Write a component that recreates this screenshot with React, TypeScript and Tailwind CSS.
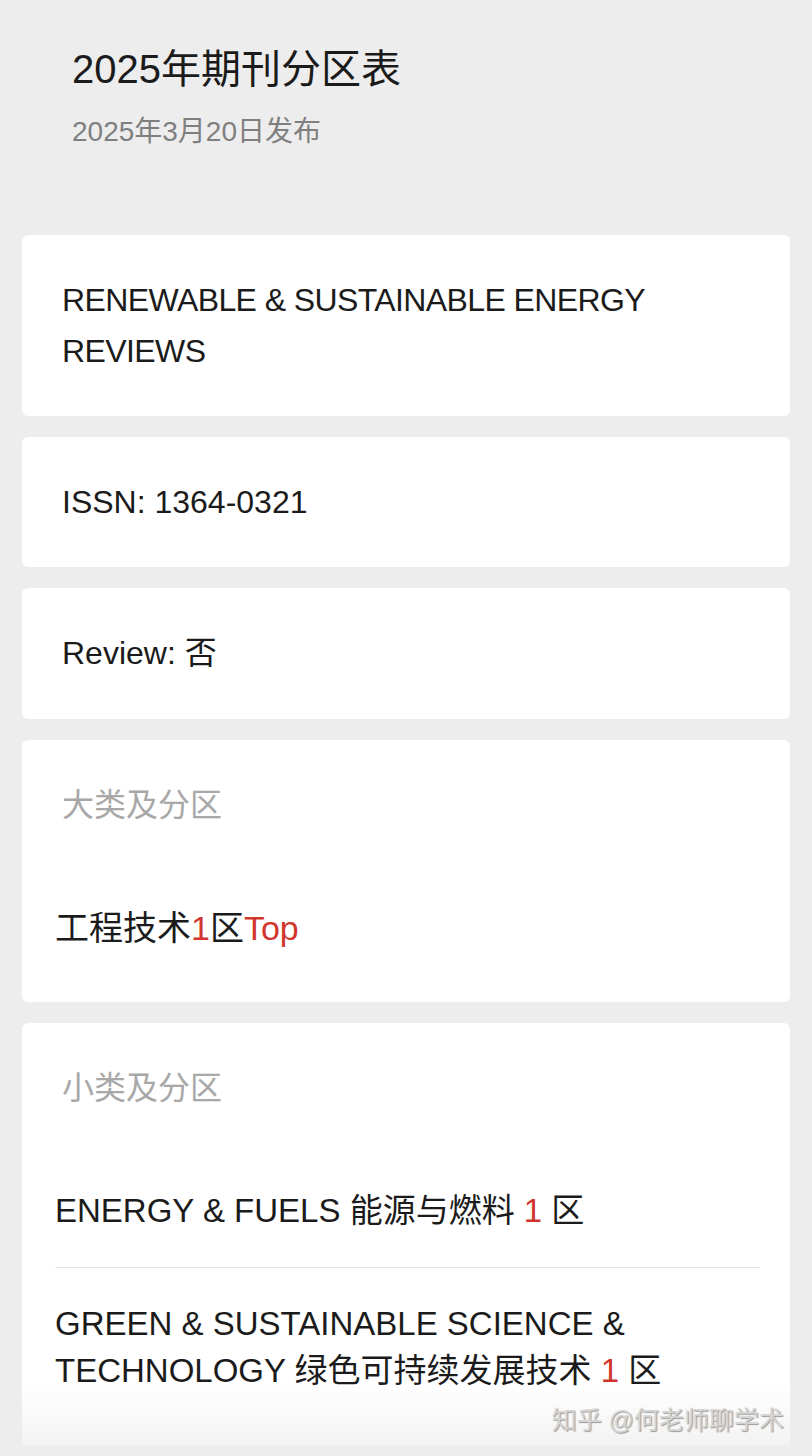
export default function App() {
  return (
    <div className="min-h-screen bg-[#ededed] pb-[11px] font-['Liberation_Sans','Noto_Sans_CJK_SC',sans-serif]">
      {/* Header */}
      <header className="pl-[72px] pt-[41px]">
        <h1 className="text-[40px] leading-[56px] text-[#1b1b1b]">2025年期刊分区表</h1>
        <p className="mt-[15px] text-[28px] leading-[39px] text-[#7f7f7f]">2025年3月20日发布</p>
      </header>

      <div className="mx-[22px] mt-[84px] flex flex-col gap-[21px]">
        {/* Journal name */}
        <div className="rounded-[6px] bg-white px-[40px] pt-[40px] pb-[39px] text-[32px] leading-[51px] tracking-[-0.6px] text-[#1b1b1b]">
          RENEWABLE &amp; SUSTAINABLE ENERGY REVIEWS
        </div>

        <div className="rounded-[6px] bg-white px-[40px] pt-[40px] pb-[39px] text-[32px] leading-[51px] text-[#1b1b1b]">
          ISSN: 1364-0321
        </div>

        <div className="rounded-[6px] bg-white px-[40px] pt-[40px] pb-[40px] text-[32px] leading-[51px] text-[#1b1b1b]">
          Review: 否
        </div>

        {/* Major category */}
        <div className="rounded-[6px] bg-white pb-[18px]">
          <div className="px-[40px] pt-[40px] text-[32px] leading-[51px] text-[#a8a8a8]">大类及分区</div>
          <div className="ml-[33px] mr-[30px] mt-[41px]">
            <div className="py-[32px] text-[34px] leading-[48px] text-[#1b1b1b]">
              工程技术<span className="text-[#d2352d]">1</span>区<span className="text-[#d2352d]">Top</span>
            </div>
          </div>
        </div>

        {/* Minor categories */}
        <div className="relative overflow-hidden rounded-[6px] bg-white pb-[20px]">
          <div className="px-[40px] pt-[40px] text-[32px] leading-[51px] text-[#a8a8a8]">小类及分区</div>
          <div className="ml-[33px] mr-[30px] mt-[41px] divide-y divide-[#e6e6e6]">
            <div className="py-[32px] text-[33px] leading-[48px] text-[#1b1b1b]">
              ENERGY &amp; FUELS 能源与燃料 <span className="text-[#d2352d]">1</span> 区
            </div>
            <div className="py-[32px] text-[33px] leading-[47px] text-[#1b1b1b]">
              GREEN &amp; SUSTAINABLE SCIENCE &amp; TECHNOLOGY 绿色可持续发展技术 <span className="text-[#d2352d]">1</span> 区
            </div>
          </div>
          <div className="pointer-events-none absolute inset-x-0 bottom-0 h-[60px] bg-gradient-to-b from-white/0 to-[#e6e6e6]/50" />
          <div className="pointer-events-none absolute right-[6px] bottom-[10px] text-[25px] leading-[32px] text-[#d4d4d4] [text-shadow:1px_1px_1px_#9a9a9a]">
            知乎 @何老师聊学术
          </div>
        </div>
      </div>
    </div>
  );
}
